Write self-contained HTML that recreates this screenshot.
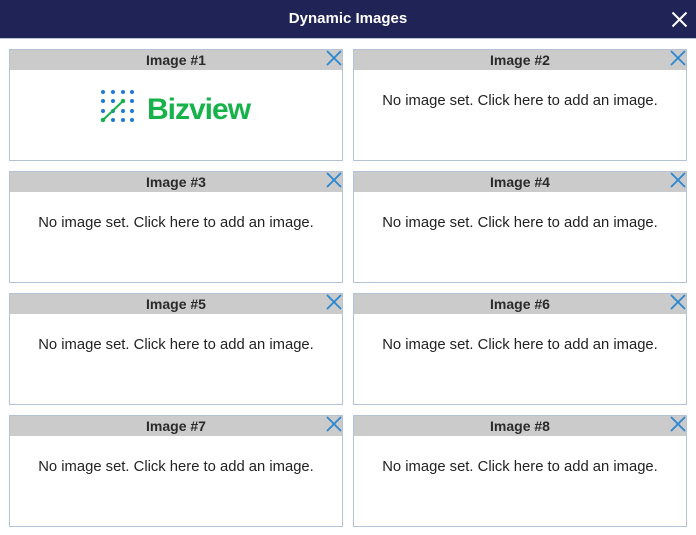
<!DOCTYPE html>
<html><head><style>
body{margin:0;width:696px;height:535px;background:#fff;font-family:"Liberation Sans",sans-serif;position:relative;overflow:hidden}
.hdr{position:absolute;left:0;top:0;width:696px;height:38px;background:#1f2356;color:#fff;font-weight:bold;font-size:15px;text-align:center;line-height:38px}
.hdr svg{position:absolute;left:671px;top:11px}
.line{position:absolute;top:38px;left:0;width:696px;height:1px;background:#b8c4d6}
.card{position:absolute;width:332px;height:110px;border:1px solid #b4c3d6;background:#fff}
.card .t{height:20px;background:#cbcbcb;text-align:center;font-size:14px;font-weight:bold;line-height:21px;color:#2a2a2a}
.card .x{position:absolute;right:0;top:0}
.card .m{text-align:center;font-size:14.8px;color:#222;margin-top:23px}
</style></head><body>
<div class="hdr">Dynamic Images<svg width="17" height="17" viewBox="0 0 17 17"><path d="M1.5 1.5L15.5 15.5M15.5 1.5L1.5 15.5" stroke="#fff" stroke-width="2"/></svg></div>
<div class="line"></div>

<div class="card" style="left:9px;top:49px"><div class="t">Image #1</div><svg class="x" width="16" height="16" viewBox="0 0 16 16"><path d="M1 1L15 15M15 1L1 15" stroke="#2b87d1" stroke-width="1.8"/></svg>
<svg style="position:absolute;left:90px;top:39px" width="34" height="34" viewBox="0 0 34 34">
<g fill="#1e7ad6">
<circle cx="3" cy="3" r="2"/><circle cx="13" cy="3" r="2"/><circle cx="23" cy="3" r="2"/><circle cx="32" cy="3" r="2"/>
<circle cx="3" cy="12" r="2"/><circle cx="13" cy="12" r="2"/><circle cx="23" cy="12" r="2"/><circle cx="32" cy="12" r="2"/>
<circle cx="3" cy="22" r="2"/><circle cx="13" cy="22" r="2"/><circle cx="23" cy="22" r="2"/><circle cx="32" cy="22" r="2"/>
<circle cx="3" cy="31" r="2"/><circle cx="13" cy="31" r="2"/><circle cx="23" cy="31" r="2"/><circle cx="32" cy="31" r="2"/></g>
<path d="M3 31L23 12" stroke="#17b24a" stroke-width="2"/><circle cx="3" cy="31" r="2.2" fill="#17b24a"/><circle cx="23" cy="12" r="2.2" fill="#17b24a"/>
</svg>
<div style="position:absolute;left:137px;top:43px;font-size:30px;color:#17b24a;font-weight:bold;letter-spacing:-1px">Bizview</div>
</div>

<div class="card" style="left:353px;top:49px"><div class="t">Image #2</div><svg class="x" width="16" height="16" viewBox="0 0 16 16"><path d="M1 1L15 15M15 1L1 15" stroke="#2b87d1" stroke-width="1.8"/></svg><div class="m">No image set. Click here to add an image.</div></div>
<div class="card" style="left:9px;top:171px"><div class="t">Image #3</div><svg class="x" width="16" height="16" viewBox="0 0 16 16"><path d="M1 1L15 15M15 1L1 15" stroke="#2b87d1" stroke-width="1.8"/></svg><div class="m">No image set. Click here to add an image.</div></div>
<div class="card" style="left:353px;top:171px"><div class="t">Image #4</div><svg class="x" width="16" height="16" viewBox="0 0 16 16"><path d="M1 1L15 15M15 1L1 15" stroke="#2b87d1" stroke-width="1.8"/></svg><div class="m">No image set. Click here to add an image.</div></div>
<div class="card" style="left:9px;top:293px"><div class="t">Image #5</div><svg class="x" width="16" height="16" viewBox="0 0 16 16"><path d="M1 1L15 15M15 1L1 15" stroke="#2b87d1" stroke-width="1.8"/></svg><div class="m">No image set. Click here to add an image.</div></div>
<div class="card" style="left:353px;top:293px"><div class="t">Image #6</div><svg class="x" width="16" height="16" viewBox="0 0 16 16"><path d="M1 1L15 15M15 1L1 15" stroke="#2b87d1" stroke-width="1.8"/></svg><div class="m">No image set. Click here to add an image.</div></div>
<div class="card" style="left:9px;top:415px"><div class="t">Image #7</div><svg class="x" width="16" height="16" viewBox="0 0 16 16"><path d="M1 1L15 15M15 1L1 15" stroke="#2b87d1" stroke-width="1.8"/></svg><div class="m">No image set. Click here to add an image.</div></div>
<div class="card" style="left:353px;top:415px"><div class="t">Image #8</div><svg class="x" width="16" height="16" viewBox="0 0 16 16"><path d="M1 1L15 15M15 1L1 15" stroke="#2b87d1" stroke-width="1.8"/></svg><div class="m">No image set. Click here to add an image.</div></div>
</body></html>
